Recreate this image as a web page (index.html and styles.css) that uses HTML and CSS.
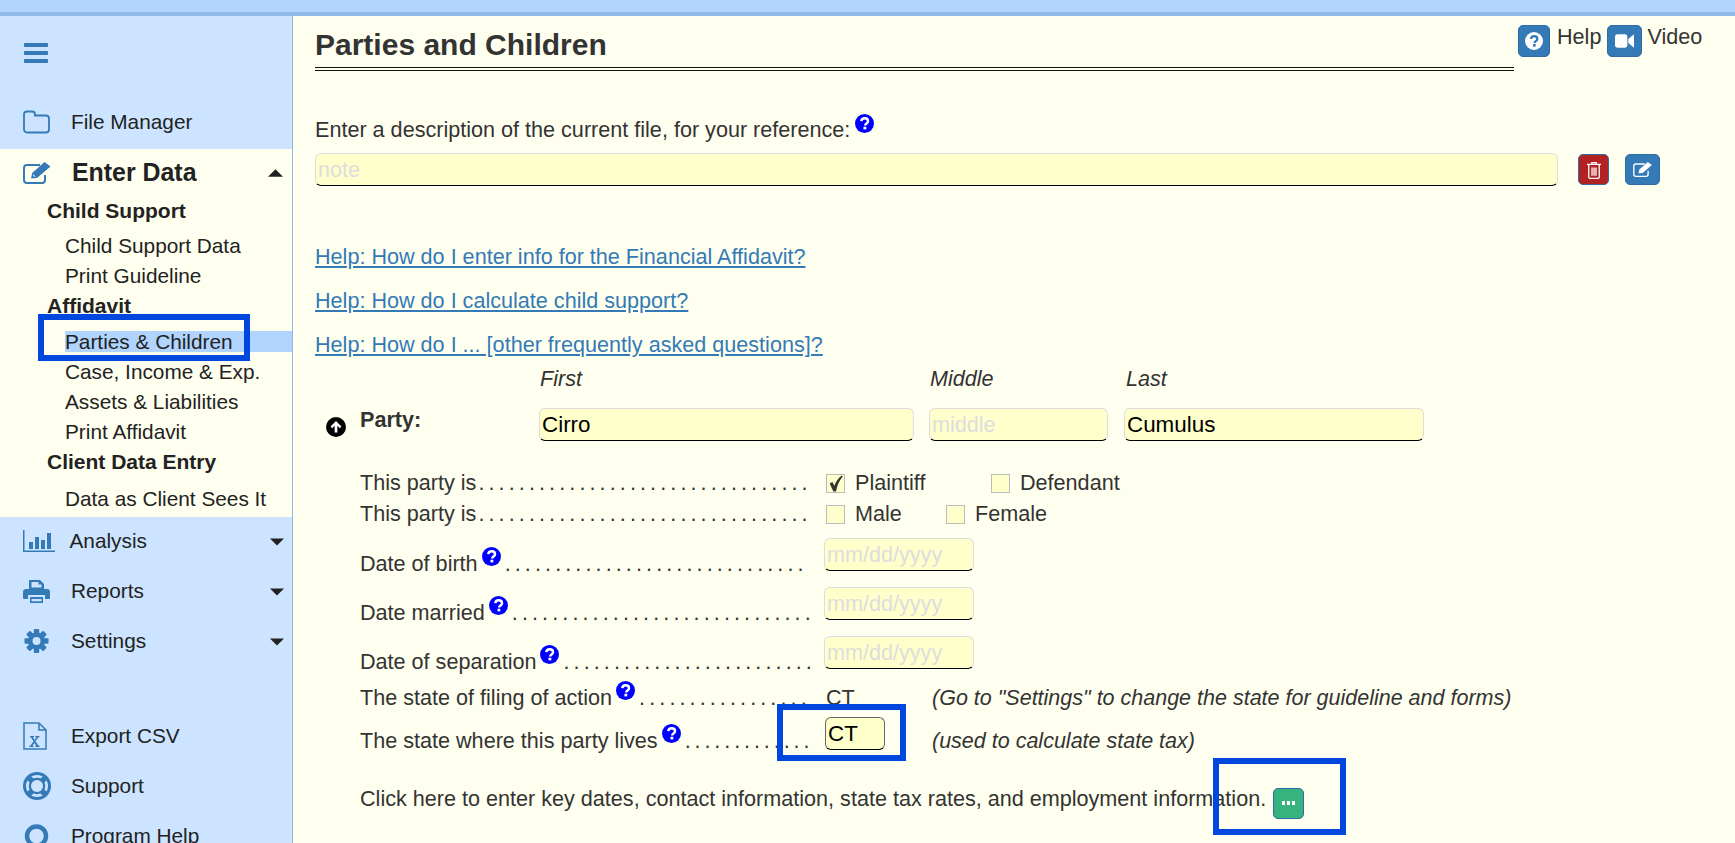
FILE: index.html
```html
<!DOCTYPE html>
<html lang="en">
<head>
<meta charset="utf-8">
<title>Parties and Children</title>
<link rel="stylesheet" href="styles.css">
</head>
<body>
<svg class="defs" width="0" height="0" aria-hidden="true">
  <symbol id="q" viewBox="0 0 20 20">
    <circle cx="10" cy="10" r="10" fill="currentColor"/>
    <path d="M6.600 7.600C6.800 5.500 8.200 4.500 10.200 4.500c2 0 3.500 1.200 3.500 3 0 2.600-3 2.500-3 4.600" fill="none" stroke="#fff" stroke-width="2.600"/>
    <rect x="8.900" y="13.400" width="3" height="2.800" fill="#fff"/>
  </symbol>
  <symbol id="edit" viewBox="0 0 29 22">
    <path d="M22 13v5a3 3 0 0 1-3 3H4a3 3 0 0 1-3-3V6a3 3 0 0 1 3-3h13" fill="none" stroke="currentColor" stroke-width="2"/>
    <path d="M8 16.500l1.200-5.500L21.500 0l6 4.500L14 16z" fill="currentColor"/>
    <path d="M10 12.800l2.400 2" stroke="#fff" stroke-width="1" fill="none"/>
  </symbol>
  <symbol id="caret" viewBox="0 0 16 8">
    <path d="M0 8L8 0l8 8z" fill="currentColor"/>
  </symbol>
</svg>

<div class="topbar"></div>
<div class="app">
  <nav class="sidebar">
    <div class="burger-row">
      <svg class="ico burger" viewBox="0 0 24 20"><path d="M1 0h22a1 1 0 0 1 1 1v2a1 1 0 0 1-1 1H1a1 1 0 0 1-1-1V1a1 1 0 0 1 1-1zm0 8h22a1 1 0 0 1 1 1v2a1 1 0 0 1-1 1H1a1 1 0 0 1-1-1V9a1 1 0 0 1 1-1zm0 8h22a1 1 0 0 1 1 1v2a1 1 0 0 1-1 1H1a1 1 0 0 1-1-1v-2a1 1 0 0 1 1-1z" fill="currentColor"/></svg>
    </div>
    <a class="nav-item file-item">
      <svg class="ico" viewBox="0 0 27 23"><path d="M1 4a3 3 0 0 1 3-3h5a3 3 0 0 1 3 3v1h11a3 3 0 0 1 3 3v11a3 3 0 0 1-3 3H4a3 3 0 0 1-3-3z" fill="none" stroke="currentColor" stroke-width="1.800"/></svg>
      <span class="nav-label">File Manager</span>
    </a>
    <section class="open-group">
      <div class="open-head">
        <svg class="ico edit-ico"><use href="#edit"/></svg>
        <span class="open-title">Enter Data</span>
        <svg class="caret"><use href="#caret"/></svg>
      </div>
      <div class="sub-head">Child Support</div>
      <a class="sub first">Child Support Data</a>
      <a class="sub">Print Guideline</a>
      <div class="sub-head">Affidavit</div>
      <a class="sub current"><span>Parties &amp; Children</span></a>
      <a class="sub">Case, Income &amp; Exp.</a>
      <a class="sub">Assets &amp; Liabilities</a>
      <a class="sub">Print Affidavit</a>
      <div class="sub-head">Client Data Entry</div>
      <a class="sub last">Data as Client Sees It</a>
    </section>
    <a class="nav-item">
      <svg class="ico wide" viewBox="0 0 32 22"><path d="M0 0h1.500v20.500H32V22H0z" fill="currentColor"/><path d="M6 12h4v7H6zM12 7h4v12h-4zM18 10h4v9h-4zM24 3h4v16h-4z" fill="currentColor"/></svg>
      <span class="nav-label">Analysis</span>
      <svg class="caret down"><use href="#caret"/></svg>
    </a>
    <a class="nav-item">
      <svg class="ico" viewBox="0 0 27 24"><path d="M6 1h11l4 4v5H6z M3 10h21a3 3 0 0 1 3 3v6a1 1 0 0 1-1 1h-4v-4H5v4H1a1 1 0 0 1-1-1v-6a3 3 0 0 1 3-3z M7 18h13v6H7z" fill="currentColor"/><path d="M8.500 3h7v2.500h3v3h-10z" fill="#cce4ff"/><path d="M8.500 20h10v2.300h-10z" fill="#cce4ff"/></svg>
      <span class="nav-label">Reports</span>
      <svg class="caret down"><use href="#caret"/></svg>
    </a>
    <a class="nav-item">
      <svg class="ico" viewBox="0 0 24 24"><g fill="currentColor"><circle cx="12" cy="12" r="8.500"/><rect x="9.300" y="0" width="5.400" height="24" rx="1"/><rect x="9.300" y="0" width="5.400" height="24" rx="1" transform="rotate(45 12 12)"/><rect x="9.300" y="0" width="5.400" height="24" rx="1" transform="rotate(90 12 12)"/><rect x="9.300" y="0" width="5.400" height="24" rx="1" transform="rotate(135 12 12)"/></g><circle cx="12" cy="12" r="4" fill="#cce4ff"/></svg>
      <span class="nav-label">Settings</span>
      <svg class="caret down"><use href="#caret"/></svg>
    </a>
    <a class="nav-item export-item">
      <svg class="ico tall" viewBox="0 0 24 28"><path d="M1 1h15l7 7v19H1z M16 1v7h7" fill="none" stroke="currentColor" stroke-width="1.500"/><path d="M7 14h4v1.300h-1l1.700 2.600 1.700-2.600h-1V14h4v1.300h-1l-3 3.900 3.200 4.500h1V25h-4.300v-1.300h1l-1.900-2.800-1.900 2.800h1V25H6.300v-1.300h1l3.300-4.500-2.900-3.900H7z" fill="currentColor"/></svg>
      <span class="nav-label">Export CSV</span>
    </a>
    <a class="nav-item">
      <svg class="ico buoy" viewBox="0 0 28 28"><circle cx="14" cy="14" r="12.500" fill="none" stroke="currentColor" stroke-width="3"/><circle cx="14" cy="14" r="7" fill="none" stroke="currentColor" stroke-width="2.500"/><path d="M6 6l16 16M22 6L6 22" stroke="currentColor" stroke-width="5.500"/><circle cx="14" cy="14" r="6" fill="#cce4ff"/></svg>
      <span class="nav-label">Support</span>
    </a>
    <a class="nav-item">
      <svg class="ico" viewBox="0 0 24 24"><circle cx="12" cy="12" r="9.500" fill="none" stroke="currentColor" stroke-width="4.500"/></svg>
      <span class="nav-label">Program Help</span>
    </a>
  </nav>

  <main class="content">
    <header class="page-head">
      <h1 class="page-title">Parties and Children</h1>
      <div class="head-tools">
        <a class="btn btn-help"><svg viewBox="0 0 20 20" class="btn-q"><circle cx="10" cy="10" r="10" fill="#fff"/><path d="M6.600 7.600C6.800 5.500 8.200 4.500 10.200 4.500c2 0 3.500 1.200 3.500 3 0 2.600-3 2.500-3 4.600" fill="none" stroke="#337ab7" stroke-width="2.600"/><rect x="8.900" y="13.400" width="3" height="2.800" fill="#337ab7"/></svg></a>
        <span class="tool-label">Help</span>
        <a class="btn btn-video"><svg viewBox="0 0 20 14" class="cam"><rect x="0" y="0" width="13" height="14" rx="2.500" fill="#fff"/><path d="M14 5l6-5v14l-6-5z" fill="#fff"/></svg></a>
        <span class="tool-label video-label">Video</span>
      </div>
    </header>

    <p class="desc">Enter a description of the current file, for your reference:<svg class="hint desc-hint"><use href="#q"/></svg></p>
    <div class="note-row">
      <input class="field note" placeholder="note">
      <a class="btn btn-del">
        <svg viewBox="0 0 16 20" class="trash"><path d="M5.500 3V1.500h5V3M0 3.500h16M2 4v14a1.500 1.500 0 0 0 1.500 1.500h9A1.500 1.500 0 0 0 14 18V4" fill="none" stroke="#fff" stroke-width="1.500"/><path d="M5 7h1.500v9.500H5zM7.300 7h1.500v9.500H7.300zM9.500 7H11v9.500H9.500z" fill="#fff"/></svg>
      </a>
      <a class="btn btn-edit"><svg class="edit-white"><use href="#edit"/></svg></a>
    </div>

    <ul class="faq">
      <li><a href="#">Help: How do I enter info for the Financial Affidavit?</a></li>
      <li><a href="#">Help: How do I calculate child support?</a></li>
      <li><a href="#">Help: How do I ... [other frequently asked questions]?</a></li>
    </ul>

    <div class="name-grid">
      <span class="arrow-cell">
        <svg viewBox="0 0 22 22" class="arrow"><circle cx="11" cy="11" r="11" fill="#000"/><path d="M11 4.500l6 6-1.800 1.800-2.700-2.700V17h-3V9.600l-2.700 2.700L5 10.500z" fill="#fff"/></svg>
      </span>
      <b class="party-label">Party:</b>
      <i class="col-first">First</i><i class="col-mid">Middle</i><i class="col-last">Last</i>
      <input class="field in-first" value="Cirro">
      <input class="field in-mid" placeholder="middle">
      <input class="field in-last" value="Cumulus">
    </div>

    <div class="form-row r-check first-check">
      <div class="lead"><span class="lead-text">This party is</span><span class="dots">.................................</span></div>
      <label class="opt o1"><span class="box"><svg viewBox="0 0 16 16"><path d="M2.500 8L5 6.500l2 3.500C8.500 6 10.500 3 14 .5l.8.8C11.500 5 9.500 10 8.500 15.500H6z" fill="#333"/></svg></span>Plaintiff</label>
      <label class="opt o2"><span class="box"></span>Defendant</label>
    </div>
    <div class="form-row r-check">
      <div class="lead"><span class="lead-text">This party is</span><span class="dots">.................................</span></div>
      <label class="opt o1"><span class="box"></span>Male</label>
      <label class="opt o3"><span class="box"></span>Female</label>
    </div>
    <div class="form-row r-date dob">
      <div class="lead"><span class="lead-text">Date of birth</span><svg class="hint"><use href="#q"/></svg><span class="dots">..............................</span></div>
      <input class="field date" placeholder="mm/dd/yyyy">
    </div>
    <div class="form-row r-date">
      <div class="lead"><span class="lead-text">Date married</span><svg class="hint"><use href="#q"/></svg><span class="dots">..............................</span></div>
      <input class="field date" placeholder="mm/dd/yyyy">
    </div>
    <div class="form-row r-date">
      <div class="lead"><span class="lead-text">Date of separation</span><svg class="hint"><use href="#q"/></svg><span class="dots">.........................</span></div>
      <input class="field date" placeholder="mm/dd/yyyy">
    </div>
    <div class="form-row r-state">
      <div class="lead"><span class="lead-text">The state of filing of action</span><svg class="hint"><use href="#q"/></svg><span class="dots">.................</span></div>
      <span class="state-val">CT</span>
      <i class="note-text">(Go to "Settings" to change the state for guideline and forms)</i>
    </div>
    <div class="form-row r-lives">
      <div class="lead"><span class="lead-text">The state where this party lives</span><svg class="hint"><use href="#q"/></svg><span class="dots dots-tight">.............</span></div>
      <input class="field state" value="CT">
      <i class="note-text">(used to calculate state tax)</i>
    </div>
    <p class="more">Click here to enter key dates, contact information, state tax rates, and employment information. <a class="btn btn-more"><svg viewBox="0 0 13 4" class="dots-ico"><path d="M0 0h3v4H0zM5 0h3v4H5zM10 0h3v4h-3z" fill="#fff"/></svg></a></p>
  </main>
</div>

<div class="mark mark-nav"></div>
<div class="mark mark-state"></div>
<div class="mark mark-more"></div>
</body>
</html>
```

FILE: styles.css
```css
* { box-sizing: border-box; }
html, body { margin: 0; padding: 0; height: 843px; overflow: hidden; }
body {
  font-family: "Liberation Sans", Arial, sans-serif;
  font-size: 21.6px;
  color: #333;
  background: #ffffef;
  position: relative;
}
.defs { position: absolute; }
a { color: inherit; text-decoration: none; }

.topbar { height: 16px; background: #b0d4fd; border-bottom: 4px solid #90bbe8; }
.app { display: flex; height: 827px; }

/* Sidebar */
.sidebar {
  flex: 0 0 293px;
  height: 827px;
  overflow: hidden;
  background: #cce4ff;
  border-right: 1px solid #90bbe8;
  color: #222;
}
.ico { display: block; color: #337ab7; width: 27px; height: 24px; flex: none; }
.burger-row { height: 86px; padding: 27px 0 0 24px; }
.burger { width: 24px; height: 20px; }
.nav-item { display: flex; align-items: center; height: 50px; padding: 0 0 2px 23px; position: relative; }
.file-item { height: 47px; padding-bottom: 8px; }
.nav-label { margin-left: 21px; font-size: 20.8px; }
.wide { width: 32px; margin-right: -6.5px; }
.tall { width: 24px; height: 28px; margin-right: 3px; }
.buoy { width: 28px; height: 28px; margin-right: -1px; }
.caret { width: 14px; height: 8px; color: #222; position: absolute; right: 8px; top: 50%; margin-top: -4px; }
.caret.down { transform: rotate(180deg); }

.open-group { background: #ffffef; height: 368px; }
.open-head { display: flex; align-items: center; height: 47px; padding-left: 23px; position: relative; }
.edit-ico { width: 29px; height: 22px; }
.open-title { font-weight: bold; font-size: 24.9px; margin-left: 20px; }
.open-head .caret { right: 9px; width: 15px; }
.sub-head { height: 30px; line-height: 30px; padding-left: 47px; font-weight: bold; font-size: 21px; }
.sub { display: block; height: 30px; line-height: 30px; padding-left: 65px; font-size: 20.8px; color: #222; white-space: nowrap; }
.sub.first { margin-top: 5px; }
.sub.last { margin-top: 7px; }
.sub.current { margin-top: 5px; height: 31px; }
.current span { display: block; background: #b0d4fd; height: 21px; line-height: 21px; position: relative; top: 5px; }
.export-item { margin-top: 45px; }

/* Main */
.content { flex: 1; min-width: 0; padding: 0 0 0 22px; }
.page-head { display: flex; height: 56px; }
.page-title {
  flex: none;
  width: 1199px;
  height: 55px;
  margin: 0;
  padding-top: 12px;
  font-size: 30px;
  line-height: 34px;
  color: #333;
  border-bottom: 4px double #111;
}
.head-tools { display: flex; margin-left: 4px; padding-top: 9px; align-items: flex-start; white-space: nowrap; }
.btn { display: inline-flex; align-items: center; justify-content: center; background: #337ab7; border: 1px solid #2e6da4; border-radius: 5px; color: #fff; }
.btn-help { width: 32px; height: 32px; }
.btn-q { width: 18px; height: 18px; }
.btn-video { width: 35px; height: 32px; margin-left: 6px; }
.cam { width: 19px; height: 14px; }
.tool-label { margin-left: 7px; line-height: 24px; }
.video-label { margin-left: 5px; }

.desc { margin: 0; padding-top: 42px; height: 81px; line-height: 24px; white-space: nowrap; }
.hint { width: 19px; height: 19px; color: #00f; flex: none; margin: -5px 2px 0 4px; }
.desc-hint { margin: 0 0 0 5px; vertical-align: 4px; }
.note-row { display: flex; align-items: center; height: 33px; }
.field {
  display: block;
  font: 22.4px "Liberation Sans", Arial, sans-serif;
  color: #000;
  background: #ffc;
  border: 1px solid #ddd;
  border-bottom: 1px solid #000;
  border-radius: 6px;
  padding: 0 2px;
  height: 33px;
  outline: none;
}
.field::placeholder { color: #ddd; opacity: 1; font-size: 21.6px; }
.note { width: 1243px; flex: none; }
.btn-del { width: 31px; height: 31px; margin-left: 20px; background: #b22222; }
.trash { width: 14px; height: 18px; }
.btn-edit { width: 35px; height: 31px; margin-left: 16px; }
.edit-white { width: 20px; height: 15px; color: #fff; }

.faq { list-style: none; margin: 0; padding: 59px 0 0; }
.faq li { height: 44.5px; line-height: 24px; }
.faq li:first-child { height: 43.5px; }
.faq li:last-child { height: 34px; }
.faq a { color: #337ab7; text-decoration: underline; }

.name-grid {
  display: grid;
  grid-template-columns: 45px 180px 390px 196px 300px;
  grid-template-rows: 26px 33px;
  row-gap: 15px;
  line-height: 24px;
}
.arrow-cell { grid-column: 1; grid-row: 2; padding: 9px 0 0 11px; }
.arrow { display: block; width: 20px; height: 20px; }
.party-label { grid-column: 2; grid-row: 2; }
.col-first { grid-column: 3; grid-row: 1; }
.col-mid { grid-column: 4; grid-row: 1; }
.col-last { grid-column: 5; grid-row: 1; }
.in-first { grid-column: 3; grid-row: 2; width: 375px; margin-left: -1px; }
.in-mid { grid-column: 4; grid-row: 2; width: 179px; margin-left: -1px; }
.in-last { grid-column: 5; grid-row: 2; width: 300px; margin-left: -2px; }

.form-row { display: flex; align-items: flex-start; padding-left: 45px; position: relative; }
.lead { display: flex; align-items: flex-start; width: 450px; flex: none; line-height: 24px; white-space: nowrap; }
.lead-text { flex: none; }
.dots { letter-spacing: 4.1px; margin-left: 2px; flex: none; }
.dots-tight { letter-spacing: 3.9px; }
.first-check { margin-top: 30px; }
.r-check { height: 31px; }
.opt { display: flex; align-items: center; line-height: 24px; height: 24px; white-space: nowrap; }
.o1 { margin-left: 16px; }
.o2 { position: absolute; left: 676px; }
.o3 { position: absolute; left: 631px; }
.box { width: 19px; height: 19px; background: #ffc; border: 1px solid #bbb; margin-right: 10px; display: block; flex: none; }
.box svg { display: block; width: 17px; height: 17px; }
.r-date { height: 49px; }
.dob { margin-top: 5px; }
.r-date .lead { padding-top: 13.5px; height: 40px; }
.date { width: 150px; height: 33px; margin-left: 14px; }
.r-state { height: 42px; margin-top: -10px; }
.r-state .lead { padding-top: 11px; height: 36px; }
.state-val { margin-left: 16px; padding-top: 11px; line-height: 24px; width: 106px; flex: none; }
.r-state .note-text { padding-top: 11px; }
.note-text { line-height: 24px; white-space: nowrap; font-size: 21.5px; }
.r-lives { height: 44px; }
.r-lives .lead { padding-top: 12px; height: 36px; }
.state { width: 60px; height: 33px; margin-left: 15px; border: 1px solid #666; border-bottom: 1px solid #000; }
.r-lives .note-text { margin-left: 47px; padding-top: 12px; }
.more { margin: 0; padding: 23px 0 0 45px; line-height: 30px; white-space: nowrap; }
.btn-more { width: 31px; height: 31px; background: #36b37e; vertical-align: 1px; margin-left: 1px; }
.dots-ico { width: 13px; height: 4px; }

/* Blue annotation boxes drawn over the screenshot */
.mark { position: absolute; border: 6px solid #0047e0; }
.mark-nav { left: 38px; top: 314px; width: 212px; height: 47px; }
.mark-state { left: 777px; top: 704px; width: 129px; height: 57px; }
.mark-more { left: 1213px; top: 758px; width: 133px; height: 77px; }
```
